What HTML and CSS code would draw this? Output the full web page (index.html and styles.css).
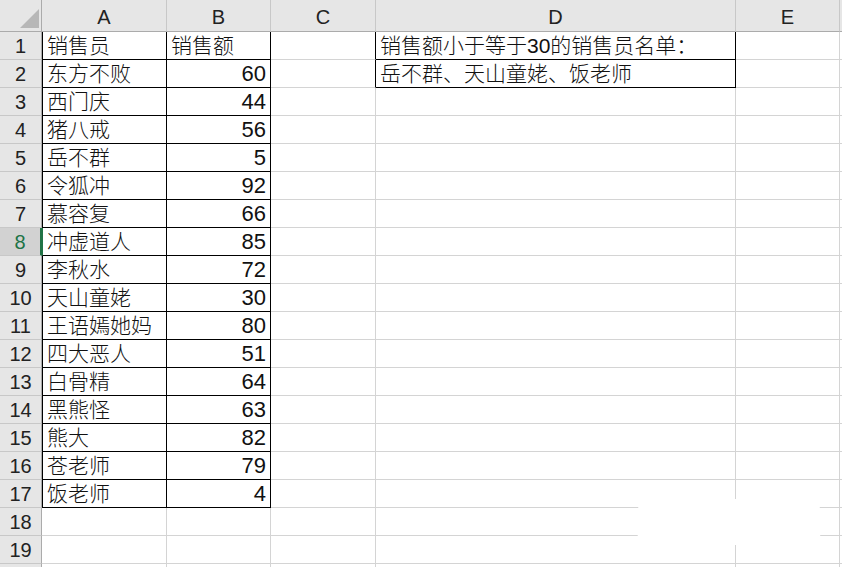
FILE: index.html
```html
<!DOCTYPE html>
<html lang="zh-CN">
<head>
<meta charset="utf-8">
<title>销售额</title>
<link rel="stylesheet" href="styles.css">
</head>
<body>
<div class="sheet">
  <div class="corner"><svg width="41" height="31" viewBox="0 0 41 31"><polygon points="20,28 39,28 39,9" fill="#b7b7b7"/></svg></div>
  <div class="hd">A</div><div class="hd">B</div><div class="hd">C</div><div class="hd">D</div><div class="hd">E</div><div class="hd hx"></div>

  <div class="rh">1</div><div class="c bl bx">销售员</div><div class="c bx">销售额</div><div class="c br"></div><div class="c bx">销售额小于等于30的销售员名单：</div><div class="c"></div><div class="c x"></div>
  <div class="rh">2</div><div class="c bl bx">东方不败</div><div class="c bx num">60</div><div class="c br"></div><div class="c bx">岳不群、天山童姥、饭老师</div><div class="c"></div><div class="c x"></div>
  <div class="rh">3</div><div class="c bl bx">西门庆</div><div class="c bx num">44</div><div class="c"></div><div class="c"></div><div class="c"></div><div class="c x"></div>
  <div class="rh">4</div><div class="c bl bx">猪八戒</div><div class="c bx num">56</div><div class="c"></div><div class="c"></div><div class="c"></div><div class="c x"></div>
  <div class="rh">5</div><div class="c bl bx">岳不群</div><div class="c bx num">5</div><div class="c"></div><div class="c"></div><div class="c"></div><div class="c x"></div>
  <div class="rh">6</div><div class="c bl bx">令狐冲</div><div class="c bx num">92</div><div class="c"></div><div class="c"></div><div class="c"></div><div class="c x"></div>
  <div class="rh">7</div><div class="c bl bx">慕容复</div><div class="c bx num">66</div><div class="c"></div><div class="c"></div><div class="c"></div><div class="c x"></div>
  <div class="rh rh-active">8</div><div class="c bl-active bx">冲虚道人</div><div class="c bx num">85</div><div class="c"></div><div class="c"></div><div class="c"></div><div class="c x"></div>
  <div class="rh">9</div><div class="c bl bx">李秋水</div><div class="c bx num">72</div><div class="c"></div><div class="c"></div><div class="c"></div><div class="c x"></div>
  <div class="rh">10</div><div class="c bl bx">天山童姥</div><div class="c bx num">30</div><div class="c"></div><div class="c"></div><div class="c"></div><div class="c x"></div>
  <div class="rh">11</div><div class="c bl bx">王语嫣她妈</div><div class="c bx num">80</div><div class="c"></div><div class="c"></div><div class="c"></div><div class="c x"></div>
  <div class="rh">12</div><div class="c bl bx">四大恶人</div><div class="c bx num">51</div><div class="c"></div><div class="c"></div><div class="c"></div><div class="c x"></div>
  <div class="rh">13</div><div class="c bl bx">白骨精</div><div class="c bx num">64</div><div class="c"></div><div class="c"></div><div class="c"></div><div class="c x"></div>
  <div class="rh">14</div><div class="c bl bx">黑熊怪</div><div class="c bx num">63</div><div class="c"></div><div class="c"></div><div class="c"></div><div class="c x"></div>
  <div class="rh">15</div><div class="c bl bx">熊大</div><div class="c bx num">82</div><div class="c"></div><div class="c"></div><div class="c"></div><div class="c x"></div>
  <div class="rh">16</div><div class="c bl bx">苍老师</div><div class="c bx num">79</div><div class="c"></div><div class="c"></div><div class="c"></div><div class="c x"></div>
  <div class="rh">17</div><div class="c bl bx">饭老师</div><div class="c bx num">4</div><div class="c"></div><div class="c"></div><div class="c"></div><div class="c x"></div>
  <div class="rh">18</div><div class="c"></div><div class="c"></div><div class="c"></div><div class="c"></div><div class="c"></div><div class="c x"></div>
  <div class="rh">19</div><div class="c"></div><div class="c"></div><div class="c"></div><div class="c"></div><div class="c"></div><div class="c x"></div>
  <div class="rh"></div><div class="c"></div><div class="c"></div><div class="c"></div><div class="c"></div><div class="c"></div><div class="c x"></div>
</div>
<div class="mark"></div>
</body>
</html>
```

FILE: styles.css
```css
html, body {
  margin: 0;
  padding: 0;
  background: #ffffff;
  width: 842px;
  height: 567px;
  overflow: hidden;
}

.sheet {
  display: grid;
  grid-template-columns: 42px 125px 104px 105px 360px 104px 2px;
  grid-template-rows: 32px;
  grid-auto-rows: 28px;
  font-family: "Liberation Sans", "Noto Sans CJK SC", sans-serif;
  color: #111;
}

.sheet > div {
  box-sizing: border-box;
  overflow: hidden;
  white-space: nowrap;
}

.corner {
  background: #e6e6e6;
  border-right: 1px solid #ababab;
  border-bottom: 1px solid #ababab;
}

.corner svg {
  display: block;
}

.hd {
  background: #e6e6e6;
  border-right: 1px solid #c8c8c8;
  border-bottom: 1px solid #ababab;
  text-align: center;
  font-size: 20px;
  line-height: 34px;
  color: #222;
}

.hx {
  border-right: none;
}

.rh {
  background: #e6e6e6;
  border-right: 1px solid #ababab;
  border-bottom: 1px solid #c8c8c8;
  text-align: center;
  font-size: 20px;
  line-height: 29px;
  color: #222;
}

.rh-active {
  background: #d2d2d2;
  color: #217346;
  border-right: 2px solid #217346;
}

.c {
  border-right: 1px solid #d4d4d4;
  border-bottom: 1px solid #d4d4d4;
  font-size: 21px;
  font-weight: 300;
  line-height: 28px;
  padding: 0 4px;
}

.x {
  border-right: none;
  padding: 0;
}

.num {
  text-align: right;
  font-size: 22px;
  font-weight: 400;
}

.bx {
  border-right-color: #000;
  border-bottom-color: #000;
}

.br {
  border-right-color: #000;
}

.bl {
  border-left: 1px solid #000;
}

.bl-active {
  border-left: 1px solid #217346;
}

.mark {
  position: absolute;
  left: 637px;
  top: 499px;
  width: 184px;
  height: 46px;
  background: #ffffff;
  border-radius: 14px;
}
```
